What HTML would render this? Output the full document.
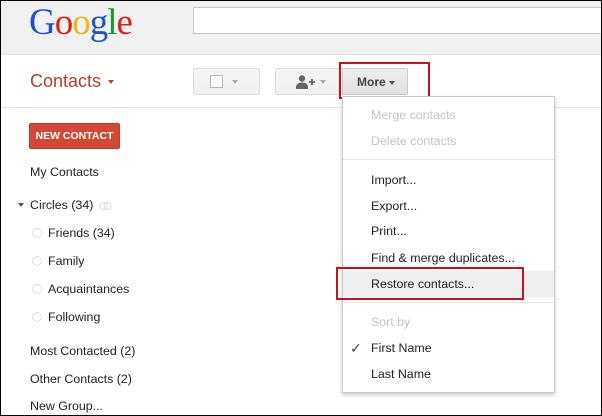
<!DOCTYPE html>
<html><head><style>
*{margin:0;padding:0;box-sizing:border-box}
body{width:602px;height:416px;overflow:hidden;background:#fff;font-family:"Liberation Sans",Arial,sans-serif;font-size:12.4px;color:#222;position:relative}
.a{position:absolute;white-space:nowrap}
#frame{position:absolute;left:0;top:0;width:602px;height:416px;border:1px solid #000;pointer-events:none;z-index:20}
#hdr{position:absolute;left:0;top:0;width:602px;height:55px;background:#f1f1f1;border-bottom:1px solid #e0e0e0}
.btn{position:absolute;height:27px;border:1px solid #dcdcdc;border-radius:2px;background:linear-gradient(#f5f5f5,#f1f1f1)}
.tri{display:inline-block;width:0;height:0;border-left:3.5px solid transparent;border-right:3.5px solid transparent;border-top:4px solid #888;vertical-align:middle}
.side{position:absolute;left:30px;color:#222}
.rad{position:absolute;left:32px;width:10px;height:10px;border:1px solid #ddd;border-radius:50%}
.mi{position:absolute;left:28px}
.red{position:absolute;border:2px solid #c5121f}
</style></head><body>
<div id="hdr"></div>
<div class="a" style="left:29px;top:1px;font-family:'Liberation Serif',serif;font-size:37px;letter-spacing:-1px"><span style="color:#1c53c9">G</span><span style="color:#d5241c">o</span><span style="color:#efb51c">o</span><span style="color:#1c53c9">g</span><span style="color:#179a35">l</span><span style="color:#d5241c">e</span></div>
<div class="a" style="left:193px;top:7px;width:410px;height:27px;background:#fff;border:1px solid #c8c8c8"></div>

<div class="a" style="left:30px;top:71px;font-size:18px;color:#c0392b">Contacts <span class="tri" style="border-top-color:#c0392b;margin-left:2px"></span></div>
<div class="btn" style="left:193px;top:68px;width:67px"><div class="a" style="left:16px;top:6px;width:13px;height:13px;border:1px solid #bbb;background:#fafafa"></div><span class="tri a" style="left:38px;top:11px;border-top-color:#aaa"></span></div>
<div class="btn" style="left:275px;top:68px;width:70px">
<svg class="a" style="left:20px;top:6px" width="24" height="14" viewBox="0 0 24 14"><circle cx="6" cy="3.5" r="3.2" fill="#666"/><path d="M0 14v-2c0-3 3-4.5 6-4.5s6 1.5 6 4.5v2z" fill="#666"/><path d="M13 7h6M16 4v6" stroke="#666" stroke-width="1.8"/></svg>
<span class="tri a" style="left:44px;top:11px;border-top-color:#aaa"></span></div>
<div class="a" style="left:0;top:107px;width:602px;height:1px;background:#e5e5e5"></div>
<div class="btn" style="left:342px;top:68px;width:66px;background:linear-gradient(#eee,#e0e0e0);border-color:#ccc"><div class="a" style="left:14px;top:6px;font-weight:bold;font-size:12px;color:#444">More <span class="tri" style="border-top-color:#555"></span></div></div>
<div class="red" style="left:339px;top:62px;width:91px;height:37px"></div>

<div class="a" style="left:29px;top:123px;width:91px;height:26px;background:#d14836;border:1px solid #c53727;border-radius:2px;color:#fff;font-weight:bold;font-size:10.5px;text-align:center;line-height:24px">NEW CONTACT</div>
<div class="side" style="top:165px">My Contacts</div>
<span class="tri a" style="left:18px;top:203px;border-top-color:#555"></span>
<div class="side" style="top:198px">Circles (34)</div>
<svg class="a" style="left:99px;top:200px" width="13" height="12"><circle cx="4.5" cy="6" r="3.5" fill="none" stroke="#ddd"/><circle cx="8.5" cy="6" r="3.5" fill="none" stroke="#ddd"/></svg>
<div class="rad" style="top:228px"></div><div class="side" style="left:48px;top:226px">Friends (34)</div>
<div class="rad" style="top:256px"></div><div class="side" style="left:48px;top:254px">Family</div>
<div class="rad" style="top:284px"></div><div class="side" style="left:48px;top:282px">Acquaintances</div>
<div class="rad" style="top:312px"></div><div class="side" style="left:48px;top:310px">Following</div>
<div class="side" style="top:344px">Most Contacted (2)</div>
<div class="side" style="top:372px">Other Contacts (2)</div>
<div class="side" style="top:399px">New Group...</div>

<div class="a" style="left:342px;top:96px;width:213px;height:297px;background:#fff;border:1px solid #ccc;box-shadow:0 2px 4px rgba(0,0,0,.2)">
<div class="mi" style="top:11px;color:#c4c4c4">Merge contacts</div>
<div class="mi" style="top:37px;color:#c4c4c4">Delete contacts</div>
<div class="a" style="left:0;top:62px;width:211px;height:1px;background:#e5e5e5"></div>
<div class="mi" style="top:76px">Import...</div>
<div class="mi" style="top:102px">Export...</div>
<div class="mi" style="top:127px">Print...</div>
<div class="mi" style="top:154px">Find &amp; merge duplicates...</div>
<div class="a" style="left:0;top:174px;width:211px;height:26px;background:#eee"></div>
<div class="mi" style="top:180px">Restore contacts...</div>
<div class="a" style="left:0;top:205px;width:211px;height:1px;background:#e5e5e5"></div>
<div class="mi" style="top:218px;color:#c4c4c4">Sort by</div>
<div class="a" style="left:7px;top:243px;font-size:14px;color:#444">✓</div>
<div class="mi" style="top:244px">First Name</div>
<div class="mi" style="top:270px">Last Name</div>
</div>
<div class="red" style="left:336px;top:267px;width:188px;height:33px"></div>
<div id="frame"></div>
</body></html>
